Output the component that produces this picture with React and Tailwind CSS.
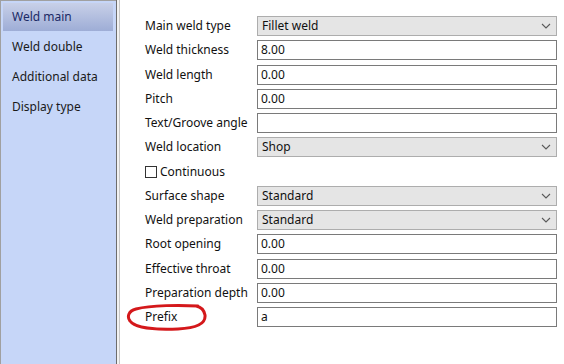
import React from "react";

const font = { fontFamily: '"Noto Sans", "Open Sans", sans-serif' };

const navItems = ["Weld main", "Weld double", "Additional data", "Display type"];

function Chevron() {
  return (
    <svg width="10" height="6" viewBox="0 0 10 6" className="shrink-0">
      <path d="M1 1 L5 5 L9 1" fill="none" stroke="#5a5a5a" strokeWidth="1.1" />
    </svg>
  );
}

function SelectBox({ value }) {
  return (
    <div className="flex h-[20px] w-[300px] items-center justify-between border border-[#adadad] bg-[#e5e5e5] pl-[4px] pr-[5px]">
      <span>{value}</span>
      <Chevron />
    </div>
  );
}

function TextBox({ value }) {
  return (
    <div className="flex h-[20px] w-[300px] items-center border border-[#7a7a7a] bg-white pl-[3px]">
      <span>{value}</span>
    </div>
  );
}

const rows = [
  { label: "Main weld type", kind: "select", value: "Fillet weld" },
  { label: "Weld thickness", kind: "text", value: "8.00" },
  { label: "Weld length", kind: "text", value: "0.00" },
  { label: "Pitch", kind: "text", value: "0.00" },
  { label: "Text/Groove angle", kind: "text", value: "" },
  { label: "Weld location", kind: "select", value: "Shop" },
  { label: "Continuous", kind: "check" },
  { label: "Surface shape", kind: "select", value: "Standard" },
  { label: "Weld preparation", kind: "select", value: "Standard" },
  { label: "Root opening", kind: "text", value: "0.00" },
  { label: "Effective throat", kind: "text", value: "0.00" },
  { label: "Preparation depth", kind: "text", value: "0.00" },
  { label: "Prefix", kind: "text", value: "a" },
];

export default function App() {
  return (
    <div className="flex h-[364px] w-[564px] overflow-hidden bg-white text-[12px] text-[#111]" style={font}>
      {/* left tab list */}
      <div className="flex h-full w-[116px] flex-col gap-[2px] border-t border-l border-[#a0a0a0] bg-[#c6d6f8] pt-[2px] pl-[2px]">
        {navItems.map((item, i) => (
          <div
            key={item}
            className={
              i === 0
                ? "flex h-[28px] w-[110px] items-center bg-gradient-to-b from-[#c8d0e8] to-[#9eadd6] pl-[9px] text-[#1b2a66]"
                : "flex h-[28px] w-[110px] items-center pl-[9px] text-[#1a1a1a]"
            }
          >
            {item}
          </div>
        ))}
      </div>
      <div className="h-full w-[3px] border-l border-[#6d6d6d] bg-[#f2f2f2]" />
      <div className="h-full w-[1px] bg-[#c8c8c8]" />

      {/* property grid */}
      <div className="relative flex flex-1 flex-col gap-[4.25px] pt-[16px] pl-[25px]">
        {rows.map((row) => (
          <div key={row.label} className="flex h-[20px] items-center">
            {row.kind === "check" ? (
              <div className="flex items-center gap-[3px]">
                <div className="h-[12px] w-[12px] border border-[#333] bg-white" />
                <span>{row.label}</span>
              </div>
            ) : (
              <>
                <span className="w-[112px] shrink-0">{row.label}</span>
                {row.kind === "select" ? <SelectBox value={row.value} /> : <TextBox value={row.value} />}
              </>
            )}
          </div>
        ))}

        {/* red marker around Prefix */}
        <svg className="absolute left-[6px] top-[302px]" width="84" height="32" viewBox="0 0 84 32">
          <path
            d="M72 4 C55 3 25 3 10 7 C2 9 1 15 4 19 C9 26 30 28 52 27 C70 26 80 22 79 13 C78 8 76 5 70 4"
            fill="none"
            stroke="#d4181b"
            strokeWidth="3"
            strokeLinecap="round"
          />
        </svg>
      </div>
    </div>
  );
}
